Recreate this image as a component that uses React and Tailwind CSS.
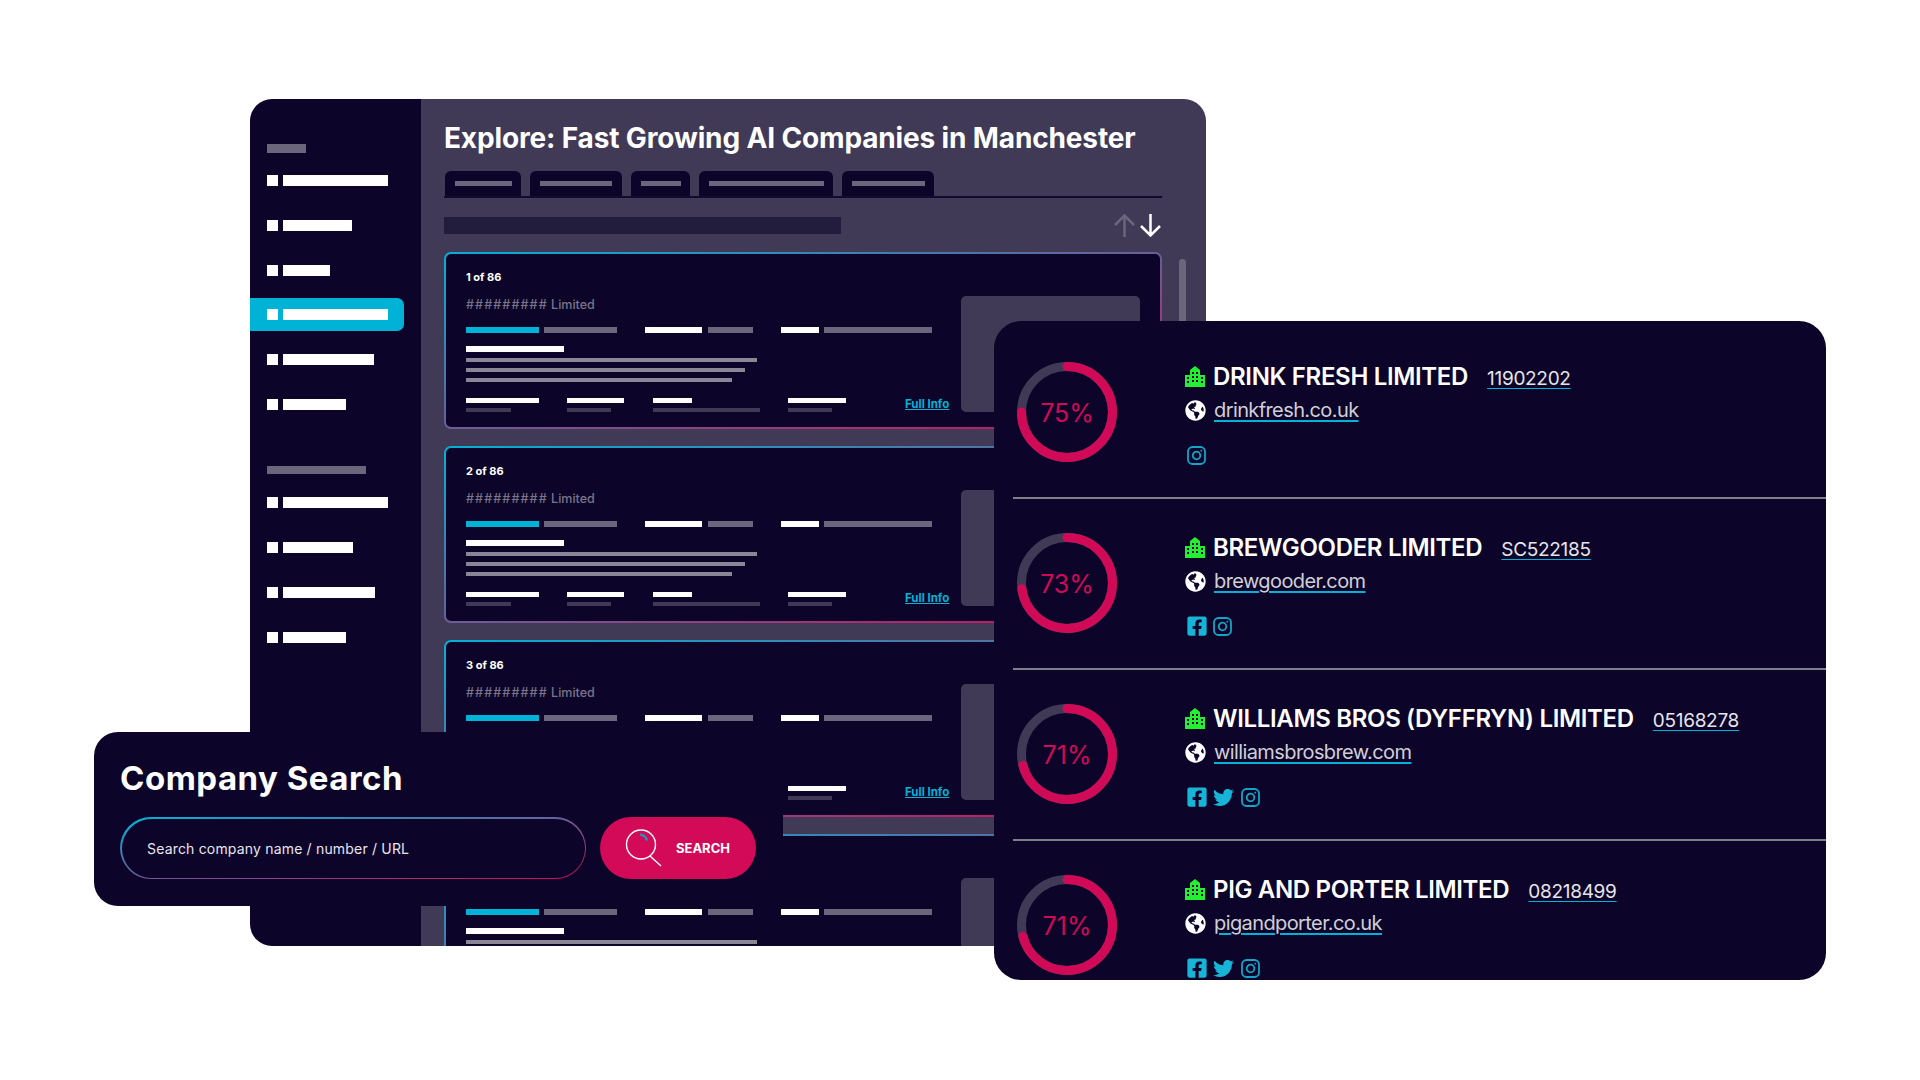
import React from 'react';
import { FaFacebookSquare, FaGlobeAmericas, FaTwitter } from 'react-icons/fa';

const navTop = ['w-[105px]', 'w-[69px]', 'w-[47px]', 'w-[105px]', 'w-[91px]', 'w-[63px]'];
const navBottom = ['w-[105px]', 'w-[70px]', 'w-[92px]', 'w-[63px]'];
const tabs = ['w-[76px]', 'w-[92px]', 'w-[59px]', 'w-[134px]', 'w-[92px]'];
const tabBars = ['w-[57px]', 'w-[72px]', 'w-[40px]', 'w-[115px]', 'w-[73px]'];

const companies = [
  { name: 'DRINK FRESH LIMITED', number: '11902202', url: 'drinkfresh.co.uk', score: 75, socials: ['instagram'] },
  { name: 'BREWGOODER LIMITED', number: 'SC522185', url: 'brewgooder.com', score: 73, socials: ['facebook', 'instagram'] },
  { name: 'WILLIAMS BROS (DYFFRYN) LIMITED', number: '05168278', url: 'williamsbrosbrew.com', score: 71, socials: ['facebook', 'twitter', 'instagram'] },
  { name: 'PIG AND PORTER LIMITED', number: '08218499', url: 'pigandporter.co.uk', score: 71, socials: ['facebook', 'twitter', 'instagram'] },
];

const NavRow = ({ width, active }) => (
  <div className={`flex h-[33px] w-[154px] items-center gap-[5px] rounded-r-[7px] pl-[17px] ${active ? 'bg-[#00b2d6]' : ''}`}>
    <div className="h-[11px] w-[11px] bg-white" />
    <div className={`h-[11px] bg-white ${width}`} />
  </div>
);

const Sidebar = () => (
  <div className="w-[171px] shrink-0 bg-[#0c0429] pt-[45px]">
    <div className="ml-[17px] h-[8.5px] w-[39px] bg-[#6b667c]" />
    <div className="mt-[11.5px] flex flex-col gap-[11.75px]">
      {navTop.map((width, i) => (
        <NavRow key={i} width={width} active={i === 3} />
      ))}
    </div>
    <div className="ml-[17px] mt-[45px] h-[8.5px] w-[99px] bg-[#6b667c]" />
    <div className="mt-[12px] flex flex-col gap-[11.75px]">
      {navBottom.map((width, i) => (
        <NavRow key={i} width={width} />
      ))}
    </div>
  </div>
);

const ResultCard = ({ index }) => (
  <div className="h-[177px] shrink-0 rounded-[7px] bg-linear-to-br/srgb from-[#00b2d6] to-[#d30b5a] p-[2px]">
    <div className="flex h-full rounded-[5px] bg-[#0c0429] pl-[20px]">
      <div className="w-[483px] shrink-0 pt-[14px]">
        <div className="text-[11px] font-bold leading-[18px] text-white">{index} of 86</div>
        <div className="mt-[10px] text-[12.5px] font-medium leading-[18px] text-[#7a7589]">
          <span className="tracking-[1.1px]">#########</span> Limited
        </div>
        <div className="mt-[13px] flex h-[6px]">
          <div className="w-[73px] bg-[#00b2d6]" />
          <div className="ml-[5px] w-[73px] bg-[#6b667c]" />
          <div className="ml-[28px] w-[57px] bg-white" />
          <div className="ml-[6px] w-[45px] bg-[#6b667c]" />
          <div className="ml-[28px] w-[38px] bg-white" />
          <div className="ml-[5px] w-[108px] bg-[#6b667c]" />
        </div>
        <div className="mt-[13px] h-[6px] w-[98px] bg-white" />
        <div className="mt-[6px] h-[4px] w-[291px] bg-[#8a8696]" />
        <div className="mt-[6px] h-[4px] w-[279px] bg-[#8a8696]" />
        <div className="mt-[6px] h-[4px] w-[266px] bg-[#8a8696]" />
        <div className="mt-[16px] grid grid-cols-[101px_86px_135px_117px_auto]">
          <div>
            <div className="h-[5px] w-[73px] bg-white" />
            <div className="mt-[5px] h-[4px] w-[45px] bg-[#403a57]" />
          </div>
          <div>
            <div className="h-[5px] w-[57px] bg-white" />
            <div className="mt-[5px] h-[4px] w-[44px] bg-[#403a57]" />
          </div>
          <div>
            <div className="h-[5px] w-[39px] bg-white" />
            <div className="mt-[5px] h-[4px] w-[107px] bg-[#403a57]" />
          </div>
          <div>
            <div className="h-[5px] w-[58px] bg-white" />
            <div className="mt-[5px] h-[4px] w-[44px] bg-[#403a57]" />
          </div>
          {/* the fourth card runs off the bottom of the panel before this line */}
          {index < 4 && (
            <span className="whitespace-nowrap text-[11.5px] font-bold leading-[12px] text-[#00b2d6] underline">Full Info</span>
          )}
        </div>
      </div>
      <div className="ml-[12px] mt-[42px] h-[116px] w-[179px] rounded-[5px] bg-[#403a57]" />
    </div>
  </div>
);

const ExplorePanel = () => (
  <div className="absolute left-[250px] top-[99px] flex h-[847px] w-[956px] overflow-hidden rounded-[22px]">
    <Sidebar />
    <div className="flex min-w-0 flex-1 flex-col bg-[#403a57] pl-[23px]">
      <h1 className="mt-[19px] whitespace-nowrap text-[28px] font-bold leading-[40px] tracking-[-0.14px] text-white">
        Explore: Fast Growing AI Companies in Manchester
      </h1>
      <div className="mt-[13px] flex h-[27px] w-[718px] gap-[9px] border-b-2 border-[#14092f] pl-[1px]">
        {tabs.map((width, i) => (
          <div key={i} className={`h-[25px] rounded-t-[6px] bg-[#0c0429] pl-[10px] pt-[10px] ${width}`}>
            <div className={`h-[5px] bg-[#6b667c] ${tabBars[i]}`} />
          </div>
        ))}
      </div>
      <div className="mt-[16px] flex h-[23px] w-[718px] items-center justify-between">
        <div className="h-[17px] w-[397px] bg-[#221c3d]" />
        <div className="mr-[1px] flex items-center gap-[5px]">
          <svg width="21" height="23" viewBox="0 0 21 23" fill="none" stroke="#6b667c" strokeWidth="2.5">
            <path d="M10.5 1.5V23M1 11l9.5-9.5L20 11" />
          </svg>
          <svg width="21" height="23" viewBox="0 0 21 23" fill="none" stroke="#ffffff" strokeWidth="2.5">
            <path d="M10.5 0v21.5M1 12l9.5 9.5L20 12" />
          </svg>
        </div>
      </div>
      <div className="mt-[15px] flex min-h-0 flex-1 overflow-hidden">
        <div className="flex w-[718px] shrink-0 flex-col gap-[17px]">
          {[1, 2, 3, 4].map((n) => (
            <ResultCard key={n} index={n} />
          ))}
        </div>
        <div className="ml-[17px] mt-[7px] h-[300px] w-[7px] rounded-full bg-[#6b667c]" />
      </div>
    </div>
  </div>
);

const SearchPanel = () => (
  <div className="absolute left-[94px] top-[732px] h-[174px] w-[689px] rounded-[24px] bg-[#0c0429] pl-[26px] pt-[26px]">
    <h2 className="text-[33px] font-bold leading-[40px] tracking-[0.5px] text-white">Company Search</h2>
    <div className="mt-[19px] flex gap-[14px]">
      <div className="h-[62px] w-[466px] rounded-full bg-linear-to-br/srgb from-[#00b2d6] to-[#d30b5a] p-[1.5px]">
        <div className="flex h-full items-center rounded-full bg-[#0c0429] pl-[25.5px] text-[14px] tracking-[0.18px] text-[#e8e6ee]">
          Search company name / number / URL
        </div>
      </div>
      <button className="flex h-[62px] w-[156px] items-center rounded-full bg-[#d20a58] pl-[25px]">
        <svg width="38" height="38" viewBox="0 0 38 38" fill="none">
          <circle cx="16" cy="15.5" r="14.5" stroke="#ffffff" strokeWidth="1.4" />
          <path d="M25 27l11 10" stroke="#ffffff" strokeWidth="1.4" />
          <path d="M15 5.5c3 .3 6 2.5 7 6" stroke="#0fa3c4" strokeWidth="2" />
        </svg>
        <span className="ml-[13px] text-[13px] font-bold leading-none text-white">SEARCH</span>
      </button>
    </div>
  </div>
);

const Donut = ({ score }) => (
  <div className="relative h-[100px] w-[100px] shrink-0">
    <svg width="100" height="100" viewBox="0 0 100 100" fill="none" className="-rotate-90">
      <circle cx="50" cy="50" r="45.5" stroke="#403a57" strokeWidth="9" />
      <circle cx="50" cy="50" r="45.5" stroke="#d10a58" strokeWidth="9" strokeLinecap="round" pathLength="100" strokeDasharray={`${score} 100`} />
    </svg>
    <div className="absolute inset-0 flex items-center justify-center pt-[3px] text-[25px] text-[#d10a58]">{score}%</div>
  </div>
);

const BuildingIcon = () => (
  <svg width="20" height="21" viewBox="0 0 20 21" className="-mt-[2px] shrink-0">
    <path d="M0 9h5V4l5-4 5 4v5h5v12H0z" fill="#22f030" />
    <g fill="#0c0429">
      <rect x="2" y="11" width="2" height="2" />
      <rect x="2" y="15" width="2" height="2" />
      <rect x="16" y="11" width="2" height="2" />
      <rect x="16" y="15" width="2" height="2" />
      <rect x="7" y="6" width="2" height="2" />
      <rect x="11" y="6" width="2" height="2" />
      <rect x="7" y="10" width="2" height="2" />
      <rect x="11" y="10" width="2" height="2" />
      <rect x="7" y="14" width="2" height="2" />
      <rect x="11" y="14" width="2" height="2" />
    </g>
  </svg>
);

const InstagramIcon = () => (
  <svg width="19" height="19" viewBox="0 0 19 19" fill="none" stroke="#12a5c7" strokeWidth="1.8">
    <rect x="1" y="1" width="17" height="17" rx="4.5" />
    <circle cx="9.5" cy="9.5" r="3.8" />
    <circle cx="14.3" cy="4.7" r="0.6" fill="#12a5c7" strokeWidth="0.8" />
  </svg>
);

const SocialIcon = ({ type }) => {
  if (type === 'facebook') return <FaFacebookSquare size={22} className="-mx-[1.5px] text-[#16b4d6]" />;
  if (type === 'twitter') return <FaTwitter size={21} className="text-[#16b4d6]" />;
  return <InstagramIcon />;
};

const CompanyRow = ({ company }) => (
  <div className="flex h-[171px] shrink-0 border-b-2 border-[#7f7f8a] pl-[4px] last:border-b-0">
    <div className="pt-[34px]">
      <Donut score={company.score} />
    </div>
    <div className="ml-[68px] pt-[37px]">
      <div className="flex h-[24px] items-center gap-[8px]">
        <BuildingIcon />
        <span className="text-[24px] font-semibold leading-[24px] tracking-[-0.33px] text-white">{company.name}</span>
        <span className="ml-[11px] mt-[3px] text-[19px] leading-[22px] tracking-[-0.3px] text-[#e6e5ec] underline decoration-[#00b2d6] underline-offset-[3px]">{company.number}</span>
      </div>
      <div className="mt-[9px] flex h-[24px] items-center gap-[8px]">
        <FaGlobeAmericas size={21} className="shrink-0 text-white" />
        <span className="text-[20px] leading-[24px] tracking-[-0.6px] text-[#d0cfd8] underline decoration-[#00b2d6] decoration-2 underline-offset-[3px]">{company.url}</span>
      </div>
      <div className="mt-[22px] flex h-[22px] items-center gap-[7px] pl-[2px]">
        {company.socials.map((type) => (
          <SocialIcon key={type} type={type} />
        ))}
      </div>
    </div>
  </div>
);

const ResultsPanel = () => (
  <div className="absolute left-[994px] top-[321px] h-[659px] w-[832px] overflow-hidden rounded-[27px] bg-[#0c0429] pl-[19px] pt-[7px]">
    {companies.map((company) => (
      <CompanyRow key={company.number} company={company} />
    ))}
  </div>
);

const App = () => (
  <div className="relative h-[1080px] w-[1920px] overflow-hidden bg-white [font-family:Inter,sans-serif]">
    <ExplorePanel />
    <ResultsPanel />
    <SearchPanel />
  </div>
);

export default App;
